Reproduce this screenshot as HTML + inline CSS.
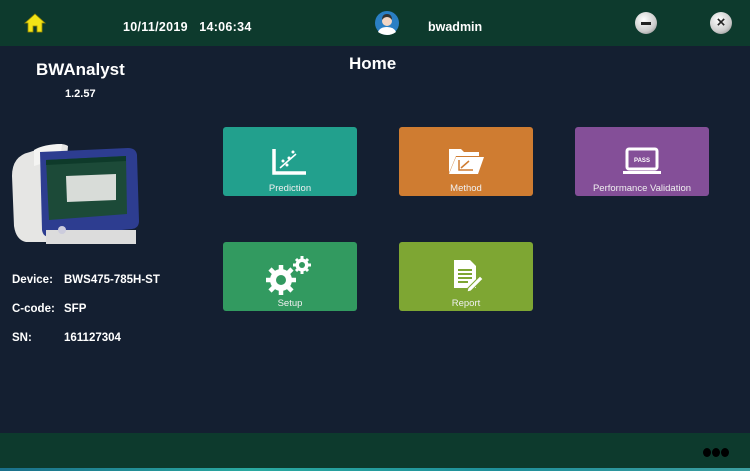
<!DOCTYPE html>
<html><head><meta charset="utf-8"><style>
*{margin:0;padding:0;box-sizing:border-box}
body{width:750px;height:471px;background:#141f31;font-family:"Liberation Sans",sans-serif;color:#fff;position:relative;overflow:hidden}
.hdr{position:absolute;left:0;top:0;width:750px;height:46px;background:#0d3a2d}
.ftr{position:absolute;left:0;top:433px;width:750px;height:35px;background:#0d3a2d}
.strip{position:absolute;left:0;top:468px;width:750px;height:3px;background:linear-gradient(90deg,#1a6f8a,#2aa9a0,#1f8f9a,#3c9ea0)}
.t{position:absolute;font-weight:bold;white-space:nowrap}
.tile{position:absolute;width:134px;height:69px;border-radius:3px}
.tile span{position:absolute;left:0;right:0;bottom:2px;text-align:center;font-size:9.5px;color:#f0f0f0}
.tile svg{position:absolute;left:50%;transform:translateX(-50%)}
.btn{position:absolute;width:22px;height:22px;border-radius:50%;background:radial-gradient(circle at 40% 35%,#fff,#ccc 60%,#777);top:12px}
</style></head><body>
<div class="hdr"></div>
<svg style="position:absolute;left:24px;top:12px" width="22" height="22" viewBox="0 0 22 22"><path d="M11 2L1 11h3v9h5v-6h4v6h5v-9h3z" fill="#f2e316" stroke="#9a8a00" stroke-width=".8"/></svg>
<div class="t" style="left:123px;top:20px;font-size:12.5px;letter-spacing:.3px">10/11/2019&nbsp;&nbsp;&nbsp;14:06:34</div>
<svg style="position:absolute;left:375px;top:11px" width="24" height="24" viewBox="0 0 24 24"><circle cx="12" cy="12" r="12" fill="#2a7fc4"/><circle cx="12" cy="10" r="5" fill="#f3d6c4"/><path d="M7 9q0-6 5-6t5 6q-2-3-5-3t-5 3z" fill="#333"/><path d="M3 21q2-5 9-5t9 5q-4 3-9 3t-9-3z" fill="#fff"/></svg>
<div class="t" style="left:428px;top:20px;font-size:12.5px">bwadmin</div>
<div class="btn" style="left:635px"><div style="position:absolute;left:6px;top:9.5px;width:10px;height:3px;background:#222"></div></div>
<div class="btn" style="left:710px"><div style="position:absolute;left:0;top:0;width:22px;text-align:center;font:bold 15px/22px 'Liberation Sans';color:#222">×</div></div>
<div class="t" style="left:36px;top:60px;font-size:17px">BWAnalyst</div>
<div class="t" style="left:65px;top:88px;font-size:11px">1.2.57</div>
<div class="t" style="left:349px;top:54px;font-size:17px">Home</div>
<svg style="position:absolute;left:10px;top:140px" width="130" height="106" viewBox="0 0 130 106">
<path d="M2 36q0-20 18-24l18-6q14-4 20 0l-8 96H16q-10-2-12-16z" fill="#e6e6e4"/>
<path d="M24 10q10-6 28-6l-2 18q-14 0-26 4z" fill="#f4f4f2"/>
<path d="M30 12l88-4q8 0 9 7l2 66q0 7-7 8l-82 8q-7 0-8-7z" fill="#2d3d90"/>
<path d="M36 20l80-4 1 58-78 6z" fill="#1c4a38"/>
<path d="M56 36l50-2 0 26-49 2z" fill="#d8dcd8"/>
<path d="M36 20l80-4v5l-80 4z" fill="#0e3a2a"/>
<rect x="36" y="90" width="90" height="14" fill="#dcdcdc"/>
<circle cx="52" cy="90" r="4" fill="#ccd"/>
</svg>
<div class="t" style="left:12px;top:274px;font-size:11.5px">Device:</div>
<div class="t" style="left:64px;top:274px;font-size:11.5px">BWS475-785H-ST</div>
<div class="t" style="left:12px;top:303px;font-size:11.5px">C-code:</div>
<div class="t" style="left:64px;top:303px;font-size:11.5px">SFP</div>
<div class="t" style="left:12px;top:332px;font-size:11.5px">SN:</div>
<div class="t" style="left:64px;top:332px;font-size:11.5px">161127304</div>

<div class="tile" style="left:223px;top:127px;background:#22a08d">
<svg style="top:20px" width="38" height="28" viewBox="0 0 38 28"><path d="M3 2v24h32" stroke="#fff" stroke-width="3.5" fill="none"/><path d="M9 21l16-14" stroke="#fff" stroke-width="1.5"/><circle cx="12" cy="14" r="1.5" fill="#fff"/><circle cx="18" cy="11" r="1.5" fill="#fff"/><circle cx="22" cy="5" r="1.5" fill="#fff"/><circle cx="16" cy="18" r="1.5" fill="#fff"/></svg>
<span>Prediction</span></div>
<div class="tile" style="left:399px;top:127px;background:#cf7c31">
<svg style="top:20px" width="38" height="28" viewBox="0 0 38 28"><path d="M2 2h12l3 3h15v4H9L2 26z" fill="#fff"/><path d="M9 10h28l-6 17H2z" fill="#fff"/><path d="M12 13v10h14M14 21l8-7" stroke="#cf7c31" stroke-width="1.5" fill="none"/></svg>
<span>Method</span></div>
<div class="tile" style="left:575px;top:127px;background:#844f98">
<svg style="top:20px" width="40" height="28" viewBox="0 0 40 28"><rect x="5" y="2" width="30" height="20" rx="2" fill="none" stroke="#fff" stroke-width="3"/><rect x="1" y="24" width="38" height="3" fill="#fff"/><text x="20" y="15" font-size="6" font-weight="bold" fill="#fff" text-anchor="middle" font-family="Liberation Sans">PASS</text></svg>
<span>Performance Validation</span></div>
<div class="tile" style="left:223px;top:242px;background:#329a60">
<svg style="top:12px" width="50" height="42" viewBox="0 0 50 42"><g fill="#fff"><circle cx="16" cy="26" r="11"/><circle cx="37" cy="11" r="6.5"/></g><g stroke="#fff" stroke-width="4.5"><path d="M16 11v30M1 26h30M5 15l22 22M27 15L5 37"/><path d="M37 2v18M28 11h18M31 5l12 12M43 5l-12 12" stroke-width="3"/></g><circle cx="16" cy="26" r="5" fill="#329a60"/><circle cx="37" cy="11" r="3" fill="#329a60"/></svg>
<span>Setup</span></div>
<div class="tile" style="left:399px;top:242px;background:#7ea633">
<svg style="top:16px" width="36" height="36" viewBox="0 0 36 36"><path d="M6 2h16l6 6v22H6z" fill="#fff"/><path d="M10 12h14M10 16h14M10 20h14M10 24h10" stroke="#7ea633" stroke-width="2"/><path d="M20 30l12-12 3 3-12 12-4 1z" fill="#fff" stroke="#7ea633" stroke-width="1"/></svg>
<span>Report</span></div>

<div class="ftr"></div>
<div style="position:absolute;left:703px;top:448px;font-size:0">
<span style="display:inline-block;width:8px;height:9px;border-radius:50%;background:#000;margin-right:1px"></span><span style="display:inline-block;width:8px;height:9px;border-radius:50%;background:#000;margin-right:1px"></span><span style="display:inline-block;width:8px;height:9px;border-radius:50%;background:#000"></span></div>
<div class="strip"></div>
</body></html>
